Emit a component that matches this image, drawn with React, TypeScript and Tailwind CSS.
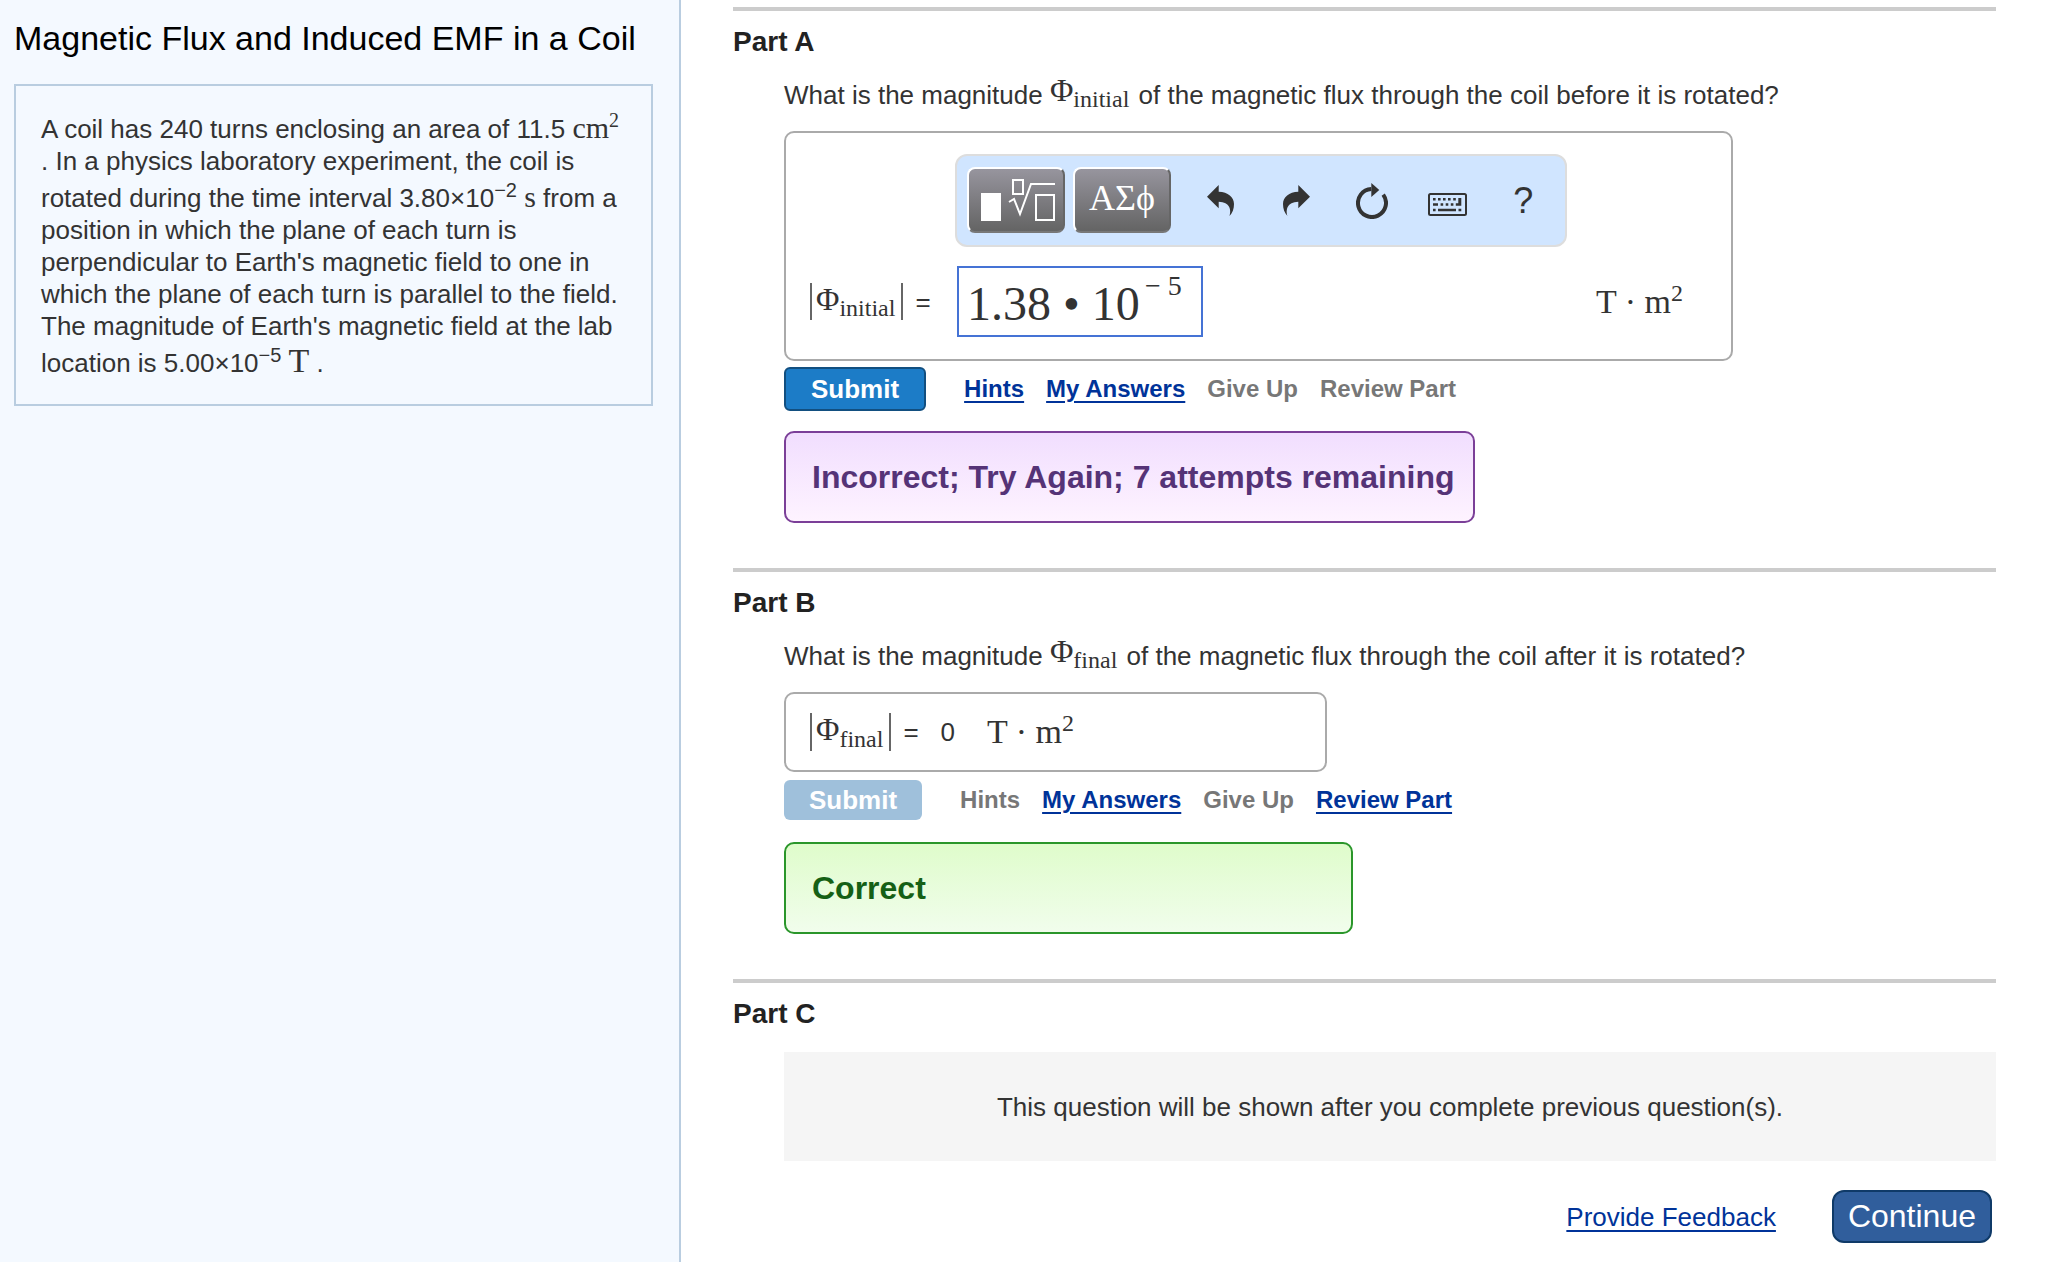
import type { ReactNode } from "react";
import clsx from "clsx";

const serif = "font-['Liberation_Serif',serif]";

function Phi({ sub }: { sub: string }) {
  return (
    <span className={clsx(serif, "mr-0.5 align-[3px] leading-none")}>
      <span className="text-[32px] leading-none">Φ</span>
      <sub className="bottom-0 align-sub text-2xl leading-none">{sub}</sub>
    </span>
  );
}

function AbsPhi({ sub }: { sub: string }) {
  return (
    <span className="flex items-center gap-3">
      <span className="border-x-2 border-[#666] px-1 leading-8">
        <Phi sub={sub} />
      </span>
      <span>=</span>
    </span>
  );
}

function Unit() {
  return (
    <span className={clsx(serif, "text-[34px] leading-10 whitespace-nowrap")}>
      T · m<sup className="top-0 align-super text-2xl leading-none">2</sup>
    </span>
  );
}

function Power({ value }: { value: string }) {
  return <sup className="top-0 align-super text-xl leading-[26px]">{value}</sup>;
}

function Part({ title, children }: { title: string; children: ReactNode }) {
  return (
    <section className="border-t-4 border-[#ccc] pt-[15px]">
      <h2 className="text-[28px] leading-8 font-bold text-[#222]">{title}</h2>
      <div className="pl-[51px]">{children}</div>
    </section>
  );
}

type Action = { label: string; enabled: boolean };

function Actions({ disabled = false, items }: { disabled?: boolean; items: Action[] }) {
  return (
    <div className="mt-1.5 flex min-h-11 items-center">
      <button
        type="button"
        disabled={disabled}
        className={clsx(
          "rounded-md px-[25px] text-[26px] font-bold text-white",
          disabled
            ? "h-10 bg-[#9fc0db] leading-10"
            : "h-11 border-2 border-[#124f80] bg-[#1c7cc7] leading-10"
        )}
      >
        Submit
      </button>
      <ul className="ml-[38px] flex gap-[22px] text-2xl font-bold">
        {items.map(({ label, enabled }) => (
          <li key={label}>
            {enabled ? (
              <a href="#" className="text-[#039] underline decoration-2 underline-offset-4">
                {label}
              </a>
            ) : (
              <span className="text-[#777]">{label}</span>
            )}
          </li>
        ))}
      </ul>
    </div>
  );
}

const paletteButton =
  "flex h-[66px] w-[98px] items-center justify-center rounded-lg border-2 border-t-white border-r-[#666] border-b-[#777] border-l-white bg-linear-to-b from-[#97959e] to-[#646464] text-white";

function Toolbar() {
  return (
    <div
      role="toolbar"
      aria-label="Equation editor"
      className="flex h-[93px] w-[612px] items-center rounded-xl border-2 border-[#ddd] bg-[#d0e5ff] pb-0.5 pl-2.5 text-[#333]"
    >
      <button type="button" aria-label="Templates" className={paletteButton}>
        <svg width="74" height="42" viewBox="0 0 74 42" fill="none" stroke="#fff" strokeWidth="2" className="ml-1">
          <rect x="0" y="14" width="20" height="28" fill="#fff" stroke="none" />
          <rect x="32" y="1" width="10" height="14" />
          <path d="M28 23l5-3 6 15L50 5h24" />
          <rect x="55" y="16" width="18" height="25" />
        </svg>
      </button>
      <button type="button" aria-label="Symbols" className={clsx(paletteButton, serif, "ml-2 pb-1 text-4xl")}>
        ΑΣϕ
      </button>
      <div className="ml-3 flex flex-1 items-center pt-0.5 pr-1">
        <button type="button" aria-label="Undo" className="flex flex-1 justify-center">
          <svg width="27" height="31" viewBox="0 0 27 31" fill="currentColor">
            <path d="M0 11.7L11.7 0v6.7C21 7 27 12 27 19c0 5-1.500 9-4.500 12C24.500 25 23 17 11.700 16.700v6.600z" />
          </svg>
        </button>
        <button type="button" aria-label="Redo" className="flex flex-1 justify-center">
          <svg width="27" height="31" viewBox="0 0 27 31" fill="currentColor">
            <path d="M27 11.700L15.300 0v6.700C6 7 0 12 0 19c0 5 1.500 9 4.500 12C2.500 25 4 17 15.300 16.700v6.600z" />
          </svg>
        </button>
        <button type="button" aria-label="Reset" className="flex flex-1 justify-center">
          <svg width="32" height="36" viewBox="0 0 32 36" fill="none">
            <path d="M27.200 11.600A14 14 0 1 1 15.300 6" stroke="currentColor" strokeWidth="4" />
            <path d="M15.300 0l8 7-8 7z" fill="currentColor" />
          </svg>
        </button>
        <button type="button" aria-label="Keyboard shortcuts" className="flex flex-1 justify-center pt-2">
          <svg width="39" height="24" viewBox="0 0 39 24" fill="currentColor">
            <rect x="1" y="1" width="37" height="21" rx="1.500" fill="none" stroke="currentColor" strokeWidth="2" />
            <path d="M5 5h2.600v2.600H5zM10 5h2.600v2.600H10zM15 5h2.600v2.600H15zM20 5h2.600v2.600H20zM25.200 5h2.600v2.600h-2.600z" />
            <path d="M5 10.300h5v2.400H5zM12.600 10.300h2.600v2.400h-2.600zM17.700 10.300h2.600v2.400h-2.600zM22.800 10.300h2.600v2.400h-2.600zM30.300 5h3v7.700h-5.500v-2.400h2.500z" />
            <path d="M5 15.700h2.600v2.600H5zM10 15.700h18v2.600H10zM30.500 15.700h2.800v2.600h-2.800z" />
          </svg>
        </button>
        <button type="button" aria-label="Help" className="flex-1 text-center text-4xl">
          ?
        </button>
      </div>
    </div>
  );
}

export default function App() {
  return (
    <div className="flex min-h-screen bg-white font-['Liberation_Sans',Arial,sans-serif] text-[26px] leading-8 text-[#333]">
      <aside className="w-[681px] shrink-0 border-r-2 border-[#b9cde0] bg-[#f4f9ff] pt-[18px] pr-[26px] pl-3.5">
        <h1 className="text-[34px] leading-10 whitespace-nowrap text-black">
          Magnetic Flux and Induced EMF in a Coil
        </h1>
        <p className="mt-[26px] border-2 border-[#b9cde0] px-[25px] pt-6 pb-[26px]">
          A coil has 240 turns enclosing an area of 11.5{" "}
          <span className={clsx(serif, "text-[30px] leading-none")}>
            cm<sup className="top-0 align-super text-xl leading-none">2</sup>
          </span>
          <br />. In a physics laboratory experiment, the coil is rotated during the time interval 3.80×10
          <Power value="−2" /> <span className={clsx(serif, "text-[30px] leading-none")}>s</span> from a
          position in which the plane of each turn is perpendicular to Earth's magnetic field to one in which
          the plane of each turn is parallel to the field. The magnitude of Earth's magnetic field at the lab
          location is 5.00×10
          <Power value="−5" /> <span className={clsx(serif, "text-[34px] leading-none")}>T</span> .
        </p>
      </aside>

      <main className="flex min-w-0 flex-1 flex-col gap-[45px] pt-[7px] pr-[50px] pb-[19px] pl-[52px]">
        <Part title="Part A">
          <p className="mt-4 h-8 whitespace-nowrap">
            What is the magnitude <Phi sub="initial" /> of the magnetic flux through the coil before it is
            rotated?
          </p>
          <div className="mt-[25px] grid w-[949px] max-w-full grid-cols-[145px_1fr_auto] items-center gap-y-[19px] rounded-[10px] border-2 border-[#aaa] pt-[21px] pr-12 pb-[22px] pl-6">
            <div className="col-start-2">
              <Toolbar />
            </div>
            <div className="col-start-1">
              <AbsPhi sub="initial" />
            </div>
            <div className={clsx(serif, "ml-0.5 flex h-[71px] w-[246px] items-center border-2 border-[#4573d5] pl-2")}>
              <input
                type="text"
                aria-label="Answer"
                defaultValue="1.38 • 10"
                className="mt-1 w-[178px] bg-transparent text-5xl outline-none"
              />
              <input
                type="text"
                aria-label="Exponent"
                defaultValue="− 5"
                className="mb-8 w-11 bg-transparent text-[28px] leading-7 outline-none"
              />
            </div>
            <Unit />
          </div>
          <Actions
            items={[
              { label: "Hints", enabled: true },
              { label: "My Answers", enabled: true },
              { label: "Give Up", enabled: false },
              { label: "Review Part", enabled: false },
            ]}
          />
          <div className="mt-5 flex h-[92px] w-[691px] items-center rounded-[10px] border-2 border-[#7b3f98] bg-linear-to-b from-[#f1defe] to-[#fef3ff] px-[26px] text-[32px] font-bold whitespace-nowrap text-[#553377]">
            Incorrect; Try Again; 7 attempts remaining
          </div>
        </Part>

        <Part title="Part B">
          <p className="mt-4 h-8 whitespace-nowrap">
            What is the magnitude <Phi sub="final" /> of the magnetic flux through the coil after it is
            rotated?
          </p>
          <div className="mt-[25px] flex h-20 w-[543px] items-center rounded-[10px] border-2 border-[#aaa] pl-6">
            <AbsPhi sub="final" />
            <span className="mr-8 ml-[22px]">0</span>
            <Unit />
          </div>
          <Actions
            disabled
            items={[
              { label: "Hints", enabled: false },
              { label: "My Answers", enabled: true },
              { label: "Give Up", enabled: false },
              { label: "Review Part", enabled: true },
            ]}
          />
          <div className="mt-5 flex h-[92px] w-[569px] items-center rounded-[10px] border-2 border-[#2a962a] bg-linear-to-b from-[#dffccb] to-[#f1fdec] px-[26px] text-[32px] font-bold text-[#156015]">
            Correct
          </div>
        </Part>

        <div>
          <Part title="Part C">
            <p className="mt-[22px] bg-[#f5f5f5] pt-[39px] pb-[38px] text-center">
              This question will be shown after you complete previous question(s).
            </p>
          </Part>
          <div className="mt-[29px] flex items-center justify-end gap-14 pr-1">
            <a href="#" className="text-[#039] underline decoration-2 underline-offset-4">
              Provide Feedback
            </a>
            <button
              type="button"
              className="h-[53px] rounded-xl border-2 border-[#0f3a68] bg-[#305e9c] px-3.5 text-[32px] leading-[49px] text-white"
            >
              Continue
            </button>
          </div>
        </div>
      </main>
    </div>
  );
}
